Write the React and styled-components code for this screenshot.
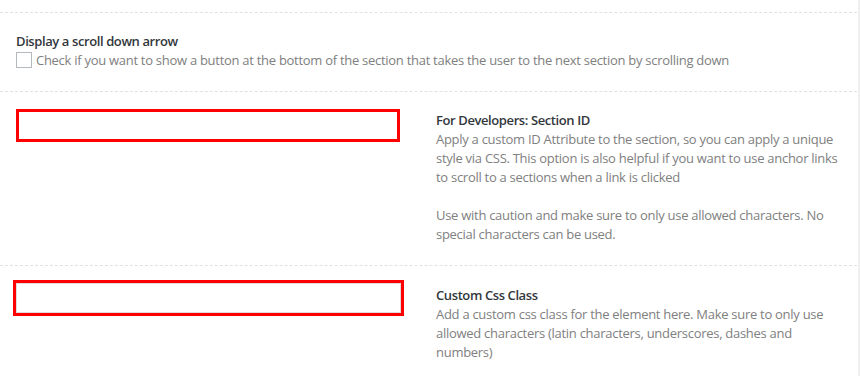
import React from "react";
import styled, { createGlobalStyle } from "styled-components";

const Global = createGlobalStyle`
  html, body { margin: 0; padding: 0; background: #fff; }
  body { font-family: "Open Sans", "Noto Sans", sans-serif; font-size: 13px; }
  * { box-sizing: border-box; }
`;

const Panel = styled.div`
  width: 860px;
  height: 376px;
  overflow: hidden;
  border-right: 2px solid #f0f0f0;
  background: #fff;
`;

const Section = styled.div`
  display: grid;
  grid-template-columns: 436px 1fr;
  padding: ${(p) => p.$pad || "0"};
  border-bottom: ${(p) => (p.$last ? "none" : "1px dashed #e1e1e1")};
  margin-right: 1px;
  height: ${(p) => p.$h || "auto"};
`;

const FullRow = styled.div`
  grid-column: 1 / -1;
  padding-left: 16px;
`;

const Title = styled.div`
  font-weight: 600;
  color: #32373c;
  line-height: 19px;
  letter-spacing: -0.4px;
`;

const Desc = styled.div`
  color: #808080;
  line-height: 19px;
  letter-spacing: -0.28px;
`;

const CheckRow = styled.label`
  display: flex;
  align-items: center;
  gap: 4px;
  color: #808080;
  line-height: 19px;
  letter-spacing: -0.28px;
`;

const Box = styled.span`
  width: 16px;
  height: 16px;
  border: 1px solid #b4b9be;
  background: #fff;
  flex: none;
  margin-top: -1px;
`;

const LeftCell = styled.div`
  padding-left: 16px;
`;

const Input = styled.div`
  width: ${(p) => p.$w}px;
  height: ${(p) => p.$h}px;
  border: 1px solid #ddd;
  background: #fff;
  outline: 3px solid #ff0000;
  outline-offset: ${(p) => (p.$outside ? "0px" : "-3px")};
`;

const RightCell = styled.div`
  padding-top: ${(p) => p.$pt || 0}px;
  padding-right: 12px;
`;

const Gap = styled.div`
  height: 19px;
`;

export default function App() {
  return (
    <>
      <Global />
      <Panel>
        <Section $h="13px" />
        <Section $pad="19px 0 21px 0">
          <FullRow>
            <Title>Display a scroll down arrow</Title>
            <CheckRow>
              <Box />
              Check if you want to show a button at the bottom of the section that takes the user to the next section by scrolling down
            </CheckRow>
          </FullRow>
        </Section>
        <Section $pad="17px 0 0 0" $h="174px">
          <LeftCell>
            <Input $w={384} $h={33} />
          </LeftCell>
          <RightCell $pt={2}>
            <Title>For Developers: Section ID</Title>
            <Desc>
              Apply a custom ID Attribute to the section, so you can apply a unique style via CSS. This option is also helpful if you want to use anchor links to scroll to a sections when a link is clicked
            </Desc>
            <Gap />
            <Desc>
              Use with caution and make sure to only use allowed characters. No special characters can be used.
            </Desc>
          </RightCell>
        </Section>
        <Section $pad="17px 0 0 0" $last>
          <LeftCell>
            <Input $w={385} $h={30} $outside />
          </LeftCell>
          <RightCell $pt={2.5}>
            <Title>Custom Css Class</Title>
            <Desc>
              Add a custom css class for the element here. Make sure to only use allowed characters (latin characters, underscores, dashes and numbers)
            </Desc>
          </RightCell>
        </Section>
      </Panel>
    </>
  );
}
